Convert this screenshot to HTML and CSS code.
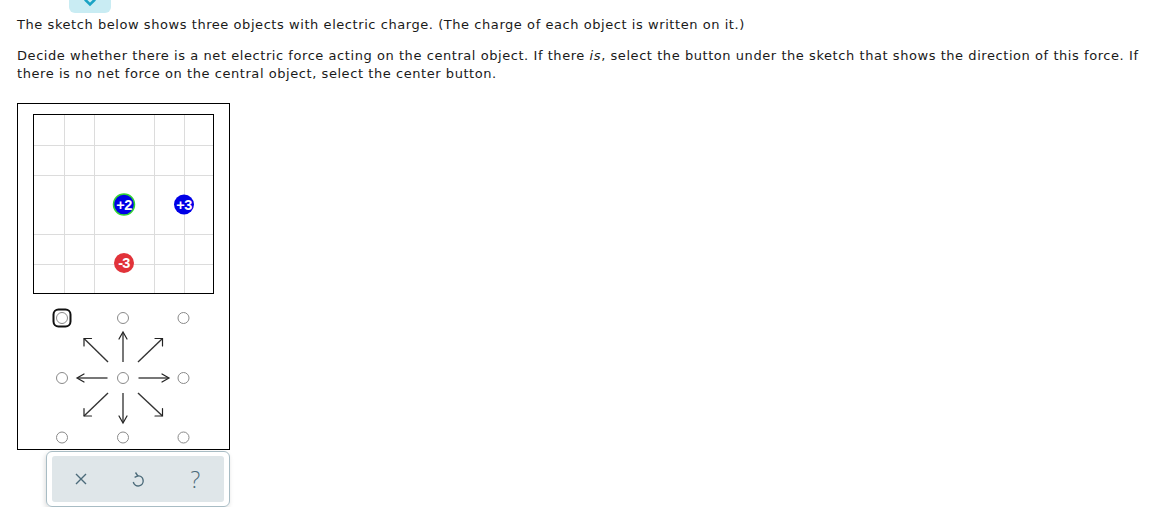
FILE: index.html
```html
<!DOCTYPE html>
<html>
<head>
<meta charset="utf-8">
<link rel="stylesheet" href="styles.css">
</head>
<body>
<div class="page">
  <div class="tab">
    <svg width="16" height="7" viewBox="0 0 16 7"><path d="M3 -0.5 L8 4.5 L13 -0.5" fill="none" stroke="#1aa3c4" stroke-width="2.6"/></svg>
  </div>
  <p class="p1">The sketch below shows three objects with electric charge. (The charge of each object is written on it.)</p>
  <p class="p2">Decide whether there is a net electric force acting on the central object. If there <em>is</em>, select the button under the sketch that shows the direction of this force. If there is no net force on the central object, select the center button.</p>
  <div class="sketch">
    <svg width="211" height="345" viewBox="0 0 211 345">
      <g stroke="#dcdcdc" stroke-width="1">
        <line x1="46.5" y1="11" x2="46.5" y2="190"/>
        <line x1="76.5" y1="11" x2="76.5" y2="190"/>
        <line x1="136.5" y1="11" x2="136.5" y2="190"/>
        <line x1="166.5" y1="11" x2="166.5" y2="190"/>
        <line x1="15" y1="41.5" x2="195" y2="41.5"/>
        <line x1="15" y1="71.5" x2="195" y2="71.5"/>
        <line x1="15" y1="130.5" x2="195" y2="130.5"/>
        <line x1="15" y1="160.5" x2="195" y2="160.5"/>
      </g>
      <rect x="15.5" y="10.5" width="180" height="179" fill="none" stroke="#000" stroke-width="1"/>
      <circle cx="106" cy="100.5" r="10.5" fill="#0000e6" stroke="#33d433" stroke-width="1.5"/>
      <text x="106" y="105.5" class="q">+2</text>
      <circle cx="166" cy="100.5" r="10" fill="#0000e6"/>
      <text x="166" y="105.5" class="q">+3</text>
      <circle cx="106" cy="159" r="10" fill="#e1333a"/>
      <text x="106" y="164" class="q">-3</text>

      <g fill="#fff" stroke="#8a8a8a" stroke-width="1">
        <circle cx="44" cy="214" r="5.5"/>
        <circle cx="105" cy="214" r="5.5"/>
        <circle cx="165.5" cy="214" r="5.5"/>
        <circle cx="44" cy="274" r="5.5"/>
        <circle cx="105" cy="274" r="5.5"/>
        <circle cx="165.5" cy="274" r="5.5"/>
        <circle cx="44" cy="333.5" r="5.5"/>
        <circle cx="105" cy="333.5" r="5.5"/>
        <circle cx="165.5" cy="333.5" r="5.5"/>
      </g>
      <rect x="35.5" y="205.5" width="17" height="17" rx="5" fill="none" stroke="#111" stroke-width="2"/>

      <g stroke="#777" stroke-width="2" fill="none">
        <line x1="89.5" y1="274" x2="60" y2="274"/>
        <line x1="120.5" y1="274" x2="150" y2="274"/>
        <line x1="105" y1="258" x2="105" y2="229"/>
        <line x1="105" y1="289" x2="105" y2="318"/>
      </g>
      <g stroke="#333" stroke-width="1.4" fill="none">
        <line x1="90" y1="258" x2="66" y2="234.5"/>
        <line x1="120" y1="258" x2="144.5" y2="234.5"/>
        <line x1="90" y1="289" x2="66" y2="312"/>
        <line x1="120" y1="289" x2="144.5" y2="312"/>
      </g>
      <g stroke="#222" stroke-width="1.2" fill="none" stroke-linecap="round">
        <path d="M66 270 L59 274 L66 278"/>
        <path d="M144 270 L151 274 L144 278"/>
        <path d="M101 235 L105 228 L109 235"/>
        <path d="M101 312 L105 319 L109 312"/>
        <path d="M66 242 L66 234.5 L73.5 234.5"/>
        <path d="M137 234.5 L144.5 234.5 L144.5 242"/>
        <path d="M66 304.5 L66 312 L73.5 312"/>
        <path d="M137 312 L144.5 312 L144.5 304.5"/>
      </g>
    </svg>
  </div>
  <div class="toolbar">
    <div class="tools">
      <span class="tool">
        <svg width="14" height="14" viewBox="0 0 14 14"><path d="M2 2 L12 12 M12 2 L2 12" stroke="#4c6b7a" stroke-width="1.4" fill="none"/></svg>
      </span>
      <span class="tool">
        <svg width="14" height="16" viewBox="0 0 14 16"><path d="M6.5 5 A5 5 0 1 1 2.3 11" stroke="#4c6b7a" stroke-width="1.4" fill="none"/><path d="M4.5 1.5 L6.8 4.8 L3.6 6.3" stroke="#4c6b7a" stroke-width="1.4" fill="none" stroke-linejoin="round"/></svg>
      </span>
      <span class="tool help">?</span>
    </div>
  </div>
</div>
</body>
</html>
```

FILE: styles.css
```css
html, body {
  margin: 0;
  padding: 0;
  background: #fff;
}
.page {
  padding-left: 17px;
  font-family: "DejaVu Sans", Verdana, sans-serif;
  font-size: 13px;
  letter-spacing: 0.56px;
  line-height: 18px;
  color: #1a1a1a;
}
.tab {
  margin-left: 52px;
  width: 42px;
  height: 13px;
  background: #c9ecf3;
  border-radius: 0 0 6px 6px;
  display: flex;
  justify-content: center;
  align-items: flex-start;
}
.tab svg { display: block; }
.p1 {
  margin: 3px 0 0 0;
}
.p2 {
  margin: 13px 0 0 0;
  width: 1125px;
}
.sketch {
  margin-top: 20px;
  width: 211px;
  height: 345px;
  border: 1px solid #000;
}
.sketch svg { display: block; }
.q {
  font-family: "Liberation Sans", Arial, sans-serif;
  font-weight: bold;
  font-size: 14.5px;
  letter-spacing: -0.6px;
  fill: #fff;
  text-anchor: middle;
}
.toolbar {
  margin-left: 29px;
  margin-top: 1px;
  width: 184px;
  height: 56px;
  border: 1px solid #a8bcc4;
  border-radius: 6px;
  box-shadow: -1px 2px 5px rgba(0,0,0,0.14);
  padding: 4px 5px;
  box-sizing: border-box;
}
.tools {
  height: 100%;
  background: #dfe6e9;
  border-radius: 3px;
  display: flex;
  justify-content: space-around;
  align-items: center;
}
.tool {
  width: 20px;
  display: flex;
  justify-content: center;
  align-items: center;
}
.tool svg { display: block; }
.help {
  font-family: "Open Sans", "DejaVu Sans", sans-serif;
  font-size: 23px;
  font-weight: 300;
  letter-spacing: 0;
  color: #4c6b7a;
  line-height: 20px;
}
```
